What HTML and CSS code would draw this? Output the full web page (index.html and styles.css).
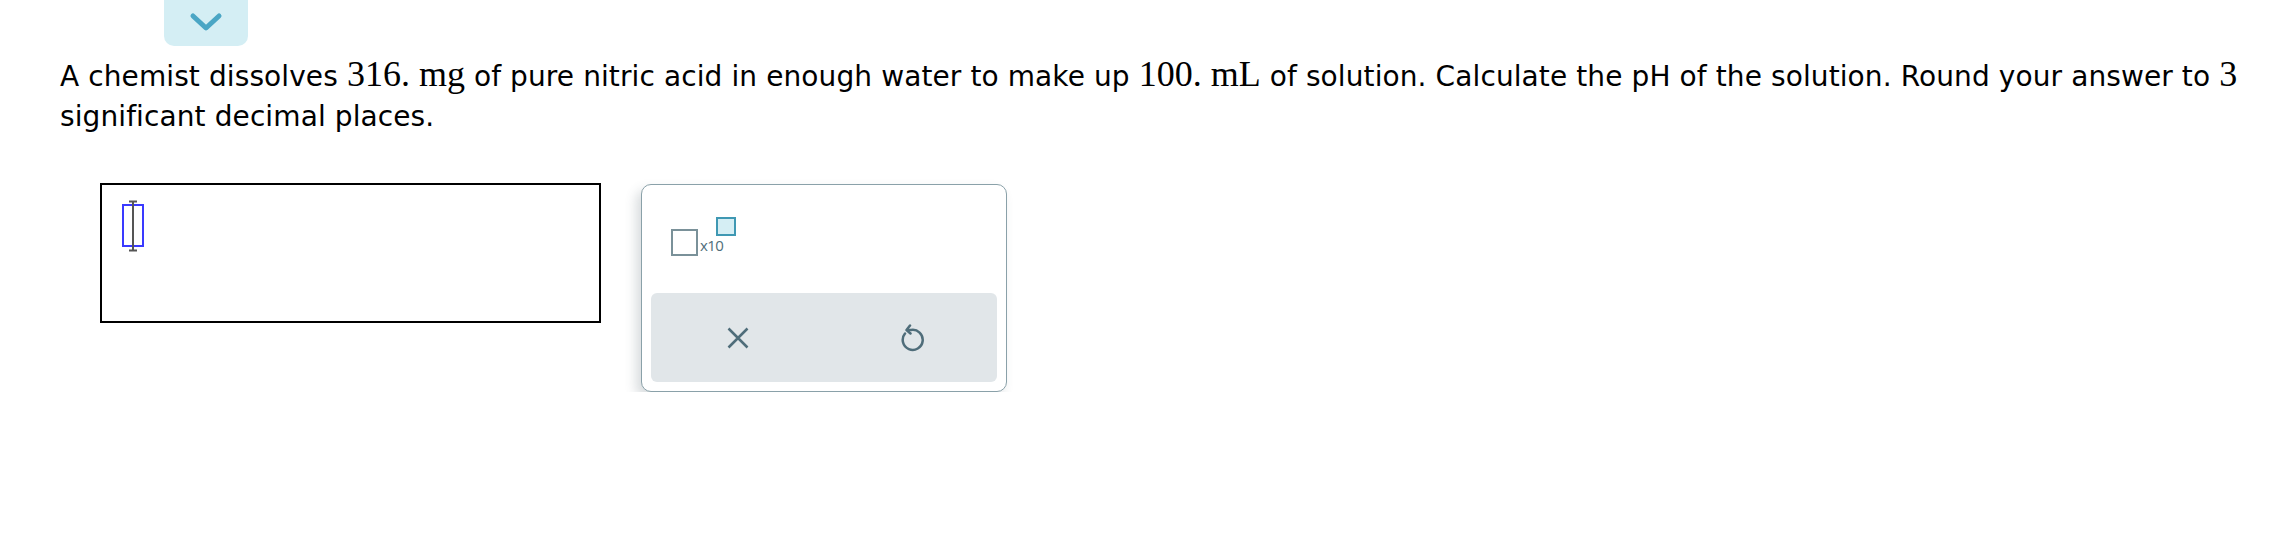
FILE: index.html
```html
<!DOCTYPE html>
<html>
<head>
<meta charset="utf-8">
<link rel="stylesheet" href="styles.css">
</head>
<body>
<div class="page">
  <div class="tab">
    <svg class="chev" width="34" height="22" viewBox="0 0 34 22"><path d="M4 4 L17 16 L30 4" fill="none" stroke="#4aa6c5" stroke-width="5" stroke-linecap="round" stroke-linejoin="round"/></svg>
  </div>
  <p class="question">A chemist dissolves <span class="m">316.</span> <span class="m">mg</span> of pure nitric acid in enough water to make up <span class="m">100.</span> <span class="m">mL</span> of solution. Calculate the pH of the solution. Round your answer to <span class="m">3</span> significant decimal places.</p>
  <div class="answer-row">
    <div class="answer-box">
      <div class="slot">
        <svg class="caret" width="12" height="52" viewBox="0 0 12 52"><path d="M2 1.5 H10 M6 1.5 V50.5 M2 50.5 H10" fill="none" stroke="#555" stroke-width="2"/></svg>
      </div>
    </div>
    <div class="palette">
      <div class="palette-top">
        <div class="sci">
          <span class="base"></span>
          <span class="x10">x10</span>
          <span class="sup"></span>
        </div>
      </div>
      <div class="actions">
        <div class="act">
          <svg width="24" height="24" viewBox="0 0 24 24"><path d="M2.5 2.5 L21.5 21.5 M21.5 2.5 L2.5 21.5" fill="none" stroke="#4f6d7a" stroke-width="2.5"/></svg>
        </div>
        <div class="act">
          <svg width="28" height="28" viewBox="0 0 28 28"><path d="M8 9.5 A10 10 0 1 0 14 6 L11.5 6" fill="none" stroke="#4f6d7a" stroke-width="2.5" stroke-linecap="round"/><path d="M13 1.5 L9.5 6 L13.5 9.5" fill="none" stroke="#4f6d7a" stroke-width="2.5" stroke-linecap="round" stroke-linejoin="round"/></svg>
        </div>
      </div>
    </div>
  </div>
</div>
</body>
</html>
```
FILE: styles.css
```css
html, body {
  margin: 0;
  padding: 0;
  background: #ffffff;
}
.page {
  padding: 0 36px 0 60px;
  font-family: "DejaVu Sans", Verdana, sans-serif;
  color: #000;
}
.tab {
  margin-left: 104px;
  width: 84px;
  height: 46px;
  background: #d4eef4;
  border-radius: 0 0 10px 10px;
  display: flex;
  justify-content: center;
  align-items: center;
}
.chev {
  display: block;
  margin-top: -1px;
}
.question {
  margin: 11px 0 0 0;
  font-size: 28px;
  line-height: 40px;
  letter-spacing: 0.1px;
}
.m {
  font-family: "Liberation Serif", "Times New Roman", serif;
  font-size: 36px;
  line-height: 20px;
  letter-spacing: 0;
}
.answer-row {
  display: flex;
  align-items: flex-start;
  gap: 40px;
  margin-top: 46px;
  margin-left: 40px;
}
.answer-box {
  border: 2px solid #000;
  padding: 19px 0 0 20px;
  box-sizing: border-box;
  width: 501px;
  height: 140px;
}
.slot {
  width: 22px;
  height: 43px;
  border: 2px solid #3a3aff;
  box-sizing: border-box;
  display: flex;
  justify-content: center;
  align-items: center;
}
.caret {
  display: block;
}
.palette {
  width: 366px;
  height: 208px;
  box-sizing: border-box;
  border: 1.5px solid #8aa1a9;
  border-radius: 10px;
  box-shadow: -5px 6px 12px rgba(60, 80, 90, 0.2);
  padding: 0 9px 9px 9px;
  display: flex;
  flex-direction: column;
  background: #fff;
  margin-top: 1px;
}
.palette-top {
  height: 108px;
  padding: 32px 0 0 20px;
  box-sizing: border-box;
}
.sci {
  display: flex;
  align-items: flex-start;
}
.base {
  width: 27px;
  height: 27px;
  box-sizing: border-box;
  border: 2.5px solid #7a9199;
  margin-top: 12px;
}
.x10 {
  font-family: "Open Sans", "DejaVu Sans", sans-serif;
  font-size: 15px;
  color: #4f6d7a;
  margin-top: 19px;
  margin-left: 2px;
  line-height: 18px;
  letter-spacing: -0.6px;
}
.sup {
  width: 20px;
  height: 19px;
  box-sizing: border-box;
  border: 2.5px solid #3f98b3;
  background: #d5eef4;
  margin-left: -7px;
}
.actions {
  flex: 1;
  background: #e1e6e9;
  border-radius: 6px;
  display: grid;
  grid-template-columns: 1fr 1fr;
  align-items: center;
  justify-items: center;
}
.act svg {
  display: block;
}
```
